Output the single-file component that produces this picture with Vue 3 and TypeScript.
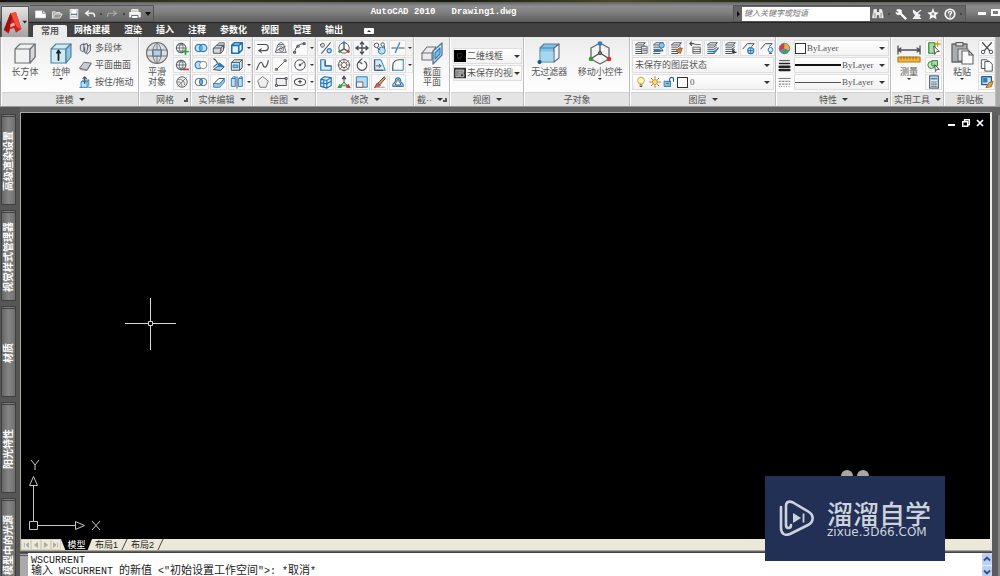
<script setup lang="ts">
import { ref } from 'vue'

type Group = { rows: string[][]; arrows?: boolean }

const K = '#4a4f55'
const B = '#2b7fc0'
const L = '#bfe0f3'
const p = (d: string, stroke = K, fill = 'none', w = 1.1) =>
  `<path d="${d}" stroke="${stroke}" fill="${fill}" stroke-width="${w}" stroke-linejoin="round" stroke-linecap="round"/>`
const c = (x: number, y: number, r: number, stroke = K, fill = 'none', w = 1.1) =>
  `<circle cx="${x}" cy="${y}" r="${r}" stroke="${stroke}" fill="${fill}" stroke-width="${w}"/>`
const layers = p('M5 2h8l-3 2.5H2zM2 7h7l3-2.300M2 9.500h7l3-2.300M2 12h7l3-2.300M2 14.300h7', K, 'none', 1.1)
const globe = c(7, 8, 5.5, K, '#eef1f3') + p('M1.500 8h11M3 4.500h8M3 11.500h8M7 2.500c-3 3-3 8 0 11M7 2.500c3 3 3 8 0 11', K, 'none', .8)

const icons: Record<string, string> = {
  // Quick access and info bar
  newDoc: p('M1 4h9l4 3v6H1z', '#eee', '#fff') + p('M10 4v3h4', '#777'),
  open: p('M2 13V5h4l1 1h5v2', '#eee', '#aaa') + p('M2 13l3-5h10l-3 5z', '#eee', '#999'),
  save: p('M3 2h10v12H3z', '#e8edf3', '#6d7a8c', 1.4) + p('M5 3h6v4H5z', '#fff', '#fff') + p('M5 10h6v4H5z', '#fff', '#ccd'),
  undo: p('M6 4L2 7l4 3M2 7h9q3 0 3 4', '#f2f2f2', 'none', 2),
  redo: p('M10 4l4 3-4 3M14 7H5Q2 7 2 11', '#a9a9a9', 'none', 1.6),
  print: p('M4 2h8v4H4z', '#fff', '#ccc') + p('M1 6h14v6H1z', '#fff', '#eee') + p('M4 10h8v4H4z', '#555', '#fff'),
  binoc: p('M3 2h3v4h4V2h3l2 11h-5V9H6v4H1z', '#fff', '#eee', .8) + p('M4 7v5M12 7v5', '#777'),
  wrench: p('M14 14L7 7', '#fff', 'none', 3.2) + p('M8 3C6 1 3 2 2 3l3 2-1 2-3-1c1 3 4 4 6 2 2-1 2-3 1-5z', '#fff', '#fff', 1),
  dish: p('M3 3c0 6 5 9 9 7zM8 7l5-4M7 9l-4 5h10l-4-4', '#f4f4f4', '#eee', 1.4),
  star: p('M8 1l2 4.800 5 .5-3.700 3.200 1.100 5L8 12l-4.400 2.500 1.100-5L1 6.300 6 5.800z', '#fff', '#fff', .5) + c(8, 8, 1.5, '#888', '#888'),
  help: c(8, 8, 6.500, '#fff', '#777', 2) + p('M6 6.500c0-3 4.500-2.500 4 0-.3 1.200-2 1.300-2 3M8 12v.1', '#fff', 'none', 1.8),
  // Modelling
  polysolid: p('M2 4l4-2v9l-2 1-2-2zM6 3l4-1 1 4-2 8-2-1V7M11 5l3-2v8l-4 4', K, '#dde2e6'),
  planar: p('M1 11l5-7 9 1-5 8z', '#666', '#c9cdd1') + p('M1 11l1 2 8 1 5-8', '#777'),
  press: p('M3 7h7v7H3zM3 7l2-2h7l-2 2M12 5v7l-2 2', B, L) + p('M7 9V1M5 3l2-2 2 2', K, 'none', 1.5) + p('M1 14h3M12 14h3', B),
  meshMore: globe + p('M9 12h6M12 9v6', '#36a23d', 'none', 2),
  meshLess: globe + p('M10 13h5', '#c33', 'none', 2),
  meshRefine: c(8, 8, 6, '#666', '#e9eaec') + p('M3 13L13 3M4 5c3-1 7 2 7 6M3 8c3-1 5 2 5 5', '#666', 'none', .9),
  union: c(5.5, 8, 4.200, B, L, 1.400) + c(10.500, 8, 4.200, B, L, 1.400) + p('M8 5c2 2 2 4 0 6-2-2-2-4 0-6z', B, '#8cc8ee'),
  subtract: c(5.500, 8, 4.200, B, L, 1.400) + c(10.500, 8, 4.200, '#888', '#fff'),
  intersect: c(5.500, 8, 4.200, '#666') + c(10.500, 8, 4.200, '#666') + p('M8 4.500c2 2 2 5 0 7-2-2-2-5 0-7z', B, '#8cc8ee', 1.400),
  extrudeFace: p('M5 5l3-3h6v6l-3 3H5z', '#777', '#c4c8cc') + p('M2 8h8v6H2zM2 8l3-3h8l-3 3M13 5v6l-3 3', K, '#d5d8db'),
  sweepFace: p('M2 13l5-4 7 1-4 4z', K, '#9fd0ee') + p('M2 1c4 1 3 5 6 7', K, 'none', 1.300) + p('M9 6l4 3-5 1z', B, B) + p('M2 10l5-4', B, 'none', 1.400),
  thicken: p('M2 10l6-6h6l-5 6z', K, '#fff') + p('M2 10v4h7l5-6V4l-5 6z', B, '#9fd0ee'),
  box: p('M2 5h8v9H2zM2 5l3-3h9l-4 3M14 2v8l-4 4', '#1c6fb5', '#e5f3fb', 1.800),
  imprint: p('M2 5h9v9H2zM2 5l3-3h9l-3 3M14 2v9l-3 3', K, '#cfe6f4') + p('M4 8h5v3H4z', B, '#86c3ea'),
  separate: p('M2 4h4v9H2zM10 4h4v9h-4zM2 4l2-2h2v2M10 4l2-2h2v2', B, L) + p('M8 2v13', K),
  // Draw
  pline: p('M2 4h9c4 0 4 7 0 7H4M6 9l-3 2 3 2', K, 'none', 1.300),
  helix: p('M2 13h12L11 4H5zM5 4c1-3 5-3 6 0M4 7c4-3 7 0 7 3s-6 2-5-1c1-2 4-1 3 1M3 11l10-5', K, 'none', .9),
  arc: p('M2 13C3 6 7 3 13 3M1 12h2v2H1zM5 5h2v2H5zM12 2h2v2h-2z', K),
  spline: p('M1 13C5 1 7 5 8 8s4 5 6-5', K, 'none', 1.400),
  line: p('M3 13L13 3M2 12h2v2H2zM12 2h2v2h-2z', '#666'),
  circle: c(8, 8, 6) + p('M8 8l4-3', K) + c(8, 8, 1, K, K),
  polygon: p('M8 2l6 5-2.500 7h-7L2 7z', '#777', '#eee'),
  rect: p('M3 4h11v8H3z', K, '#eee') + p('M2 11h2v2H2zM13 3h2v2h-2z', K, '#fff'),
  ellipse: '<ellipse cx="8" cy="8" rx="6.500" ry="4" fill="none" stroke="#4a4f55" stroke-width="1.200"/>' + p('M8 6v3M6.500 7.500h3', K, 'none', 1.400),
  // Modify
  mirror: p('M3 14L13 2', K, 'none', 1.300) + p('M2 4c2-3 5-1 4 2-2 2-5 1-4-2z', K, '#ddd') + p('M9 11c1-3 5-3 5 0s-4 4-5 0z', B, L, 1.400),
  rot3: c(8, 8, 6, '#666', '#f4f4f4') + p('M8 2v7M8 9l5 3M8 9l-5 3', K, 'none', 1.400) + c(8, 2, 1.200, B, B) + c(13, 12, 1.200, '#c33', '#c33') + c(3, 12, 1.200, '#393', '#393'),
  move: p('M8 1v14M1 8h14M6 3.500L8 1l2 2.500M6 12.500L8 15l2-2.500M3.500 6L1 8l2.500 2M12.500 6L15 8l-2.500 2', K, 'none', 1.500),
  alignObj: p('M2 2h5v7h7v5H2z', B, '#d7edf9', 1.400) + p('M7 4v5h6', K),
  array: c(8, 8, 6.300, '#555') + c(8, 8, 3, '#a55') + p('M8 1v4M8 11v4M1 8h4M11 8h4M3 3l3 3M13 13l-3-3M3 13l3-3M13 3l-3 3', '#777'),
  rotate: p('M5 4a5.500 5.500 0 1 0 6 0M8 1L4.500 4l3.500 2.500', K, 'none', 1.300),
  mesh3: p('M2 5l4-3 8 1v9l-5 3-7-2zM2 9l7 1 5-3M9 6v9M5.500 5.500v8.500M2 5l7 1 5-3', '#1c6fb5', '#d7edf9', 1.300),
  gizmo: p('M8 9V3M8 9l5 4M8 9l-5 4', K) + p('M6 4l2-3 2 3z', K, K) + p('M11 14l4 .5-2-3.500z', '#c33', '#c33') + p('M5 14l-4 .5L3 11z', '#393', '#393') + p('M5 12l3-4 3 4z', '#393', '#cfe5cf'),
  scale: p('M2 2h12v12H2z', B, '#b8dcf1') + p('M2 8h7v6H2z', '#666', '#f2f4f5'),
  copy: c(4, 5, 2.600) + c(11, 4, 2, K) + c(10, 11, 4, B, L) + p('M5 8l3 2M13 6v2', K),
  trim: p('M1 8h5M9 8h6', K, 'none', 1.300) + p('M5 13L10 2', B, 'none', 1.400),
  stretch: p('M2 2h7l5 12H2z', B, '#d7edf9') + p('M2 2v12h9M4 9h5M7 7l2 2-2 2', K),
  fillet: p('M2 14V9c0-5 4-7 7-7h5', K, 'none', 1.300) + p('M2 14h12V2', B),
  erase: p('M2 14l3-5 3 3z', '#a33', '#c66') + p('M6 9l7-7 1 2-6 7z', '#6a4a20', '#d9a66f') + p('M5 14h8', '#999'),
  offset: p('M2 13c-1-4 3-4 3-6 0-5 6-5 6 0 0 2 4 2 3 6z', B, L, 1.300) + p('M5 11c0-3 2-2 2-5 0-1 2-1 2 0 0 3 2 2 2 5z', K, '#fff'),
  // Layers
  layProps: layers + p('M9 6h6v8H9zM10 9h4M10 11h4', K, '#dfe5ea', .9),
  layCur: layers + c(11, 5, 3, B, '#8cc4e8') + p('M3 11h9', B, 'none', 2),
  layMatch: layers + p('M8 10l6-2-2 6-3-1z', '#a0561c', '#d98a3f'),
  layPrev: p('M2 3h5M4 1L2 3l2 2', K, 'none', 1.300) + p('M8 4h6M6 7h8v7H6zM6 9.500h8M6 12h8', '#666'),
  layIso: layers + p('M9 14l5-6M3 12h6', B, 'none', 1.600),
  layOff: layers + p('M10 9v5l4-1', '#234', '#345'),
  layFreeze: p('M1 9l5-6h8l-3 3', K, '#eee') + c(10, 11, 3.500, B, '#b9dcf2', 1.300) + p('M10 8v6M7 11h6', B),
  layBulb: p('M1 9l5-6h8l-3 3', K, '#eee') + c(12, 10, 2.700, B, '#d7edf9') + p('M11 14h2', K, 'none', 1.500),
  bulb: c(8, 6, 4.500, '#b79c3d', '#fff6b0') + p('M6.500 12h3M7 14h2', K, 'none', 1.600),
  sun: c(8, 8, 3.300, '#c07a10', '#ffe27a') + p('M8 1v2M8 13v2M1 8h2M13 8h2M3 3l1.500 1.500M11.500 11.500L13 13M3 13l1.500-1.500M11.500 4.500L13 3', '#a55f10', 'none', 1.200),
  unlock: p('M2 7h8v7H2z', '#2a6896', '#7cc0e6') + p('M9 7V4c0-3 5-3 5 0v3', '#1c5f95', 'none', 1.500) + p('M5 10h2', K),
  // Properties
  wheel: '<path d="M8 8V1.500A6.500 6.500 0 0 1 14 10z" fill="#e3b52b"/><path d="M8 8l6 2A6.500 6.500 0 0 1 2.500 11.500z" fill="#3e8ed0"/><path d="M8 8l-5.500 3.500A6.500 6.500 0 0 1 8 1.500z" fill="#c8414b"/><path d="M8 8l-2 6a6.500 6.500 0 0 0 6-1z" fill="#44a05b"/>' + c(8, 8, 6.5, '#777'),
  weights: p('M2 2h12', '#222', 'none', 1) + p('M2 5.500h12', '#222', 'none', 2) + p('M2 9.500h12M2 13.500h12', '#222', 'none', 3),
  types: p('M1 3h14', '#666') + '<path d="M1 6.500h14M1 10h14" stroke="#555" stroke-dasharray="3 1"/><path d="M1 13h14" stroke="#555" stroke-dasharray="1 2"/>',
  visual: '<path d="M0 0h16v16H0z" fill="#000"/>' + p('M5 5l4-1 2 3-2 4H6z', '#3a3a3a'),
  saved: '<path d="M0 1h16v14H0z" fill="#333"/>' + p('M3 4h10v3H7v6H3z', '#ccc', '#888') + p('M9 9h4v4H9z', '#ddd'),
  // Utilities and clipboard
  selAll: p('M2 2h7v12H2z', '#36863d', '#a9dca4', 1.400) + p('M8 6l6 6-3 0-2 3z', K, '#fff') + p('M12 1v5M10 3.500h5', '#d99b12', 'none', 1.600),
  selQuick: c(5, 8, 4, '#36863d', '#c8e8c4') + p('M6 3h6v6H6z', '#36863d', '#a9dca4') + p('M9 8l5 5h-3l-1 2z', K, '#fff'),
  calc: p('M3 1h10v14H3z', '#5a6b7c', '#dde7ef', 1.400) + p('M5 4h6', '#4b8cbd', 'none', 2) + '<path d="M5 8h6M5 10.500h6M5 13h6" stroke="#456" stroke-width="1.400" stroke-dasharray="1.500 .7"/>',
  cut: p('M3 2l8 9M13 2L5 11', K, 'none', 1.500) + c(3.500, 12.500, 2) + c(12.500, 12.500, 2),
  copyclip: p('M2 2h6l2 2v8H2z', K, '#fff') + p('M6 4h5l3 3v8H6z', K, '#fff'),
  matchprop: p('M2 2h11v9H2z', '#1c5f95', '#cfe5f5', 1.500) + p('M4 4h4v4H4z', B, B) + p('M7 14l3-5 5-2-2 6z', '#a9611a', '#e6a34a')
}

const big: Record<string, string> = {
  cube: p('M2 8h15v14H2zM2 8l5-5h15l-5 5M22 3v13l-5 6', '#6b6f73', '#f1f1f1', 1.200) + p('M17 8h.5L22 3v13l-5 6z', '#6b6f73', '#d5d7d9'),
  extrude: p('M2 8h15v14H2zM2 8l5-5h15l-5 5', '#4a7f9c', '#cfeaf6') + p('M17 8l5-5v13l-5 6z', '#4a7f9c', '#8ec6e0') + p('M9.500 19v-9', '#222', 'none', 1.800) + p('M7.500 12l2-3 2 3z', '#222', '#222'),
  sphere: c(12, 12, 10.500, '#6b6f73', '#dcdee1') + p('M2 9h20M2 15h20M12 1.500v21M12 1.500c-6 5-6 16 0 21M12 1.500c6 5 6 16 0 21', '#6b6f73', 'none', .9) + p('M8 9h8v6H8z', '#52748b', '#b6cedb'),
  section: p('M2 12l5-6h9l-4 6v7H2z', '#6b6f73', '#ececee') + p('M2 12h10', '#6b6f73') + p('M13 10l9-8v12l-9 9z', '#53788f', '#cfe3ef', 1.300) + p('M15 12l5-5v6l-5 5z', B, '#7fbde4'),
  filter: p('M3 7h14v14H3zM3 7l4-4h15l-5 4', '#54809b', '#7fc3e6') + p('M17 7l5-4v14l-5 4z', '#667', '#eaf4fa') + p('M4 11h12v9H4z', '#a5d8ef', '#a5d8ef') + c(2.500, 21, 1.500, '#16568c', '#16568c'),
  gizmo: p('M12 2l9 5v11l-9 5-9-5V7z', '#666', '#f4f5f5', 1.300) + p('M12 3v9M12 12l8 5M12 12l-8 5', K, 'none', 1.300) + c(12, 2.500, 1.800, '#2b7fc0', '#2b7fc0') + c(3, 18, 1.800, '#393', '#393') + c(21, 18, 1.800, '#c33', '#c33') + c(12, 12, 1.500, '#444', '#888'),
  measure: p('M1 5v8M23 5v8M1 9h22M4 7L1 9l3 2M20 7l3 2-3 2', K, 'none', 1.300) + p('M1 16h22v5H1z', '#b9790f', '#f0b73c', 1.200) + p('M4 16v2M7 16v2M10 16v2M13 16v2M16 16v2M19 16v2', '#8a5a10', 'none', .9),
  paste: p('M2 3h15v18H2z', '#666', '#a9adb1', 1.300) + p('M6 1.500h7v3.500H6z', '#555', '#d9dbdd') + p('M8 8h10v12H8z', '#666', '#ddd') + p('M12 10h7l4 4v9H12z', '#666', '#fafafa') + p('M19 10v4h4', '#555')
}

const solid: Group[] = [{ rows: [['union', 'extrudeFace', 'box'], ['subtract', 'sweepFace', 'imprint'], ['intersect', 'thicken', 'separate']], arrows: true }]
const draw: Group[] = [
  { rows: [['pline', 'helix'], ['spline', 'line'], ['polygon', 'rect']] },
  { rows: [['arc'], ['circle'], ['ellipse']], arrows: true }
]
const modify: Group[] = [
  { rows: [['mirror', 'rot3', 'move'], ['alignObj', 'array', 'rotate'], ['mesh3', 'gizmo', 'scale']] },
  { rows: [['copy', 'trim'], ['stretch', 'fillet'], ['erase', 'offset']], arrows: true }
]
const toolPanels = [
  { title: '实体编辑', cls: 'p-solid', groups: solid },
  { title: '绘图', cls: 'p-draw', groups: draw },
  { title: '修改', cls: 'p-mod', groups: modify }
]
const layerTools = [['layProps', 'layCur'], ['layMatch', 'layPrev'], ['layIso', 'layOff'], ['layFreeze', 'layBulb']]

const ribbonTabs = ['常用', '网格建模', '渲染', '插入', '注释', '参数化', '视图', '管理', '输出']
const active = ref('常用')
const palettes = ['高级渲染设置', '视觉样式管理器', '材质', '阳光特性', '模型中的光源']
const query = ref('')
</script>

<template>
  <div class="app">
    <div class="strip"></div>
    <header class="head">
      <button class="logo" aria-label="应用程序菜单">
        <svg viewBox="0 0 28 30">
          <path d="M2 23L9 5l6-1 6 18-6 4-2-5-4 1-2 5z" fill="#cf2020" />
          <path d="M9 5l6-1 6 18-5-2-5-11z" fill="#f0503f" />
          <path d="M2 23L9 5l2 5-4 15z" fill="#98120f" />
          <path d="M9 17l4-2 1 3-5 2z" fill="#f6b0a8" />
          <path d="M22 13h5l-2.500 3z" fill="#222" />
        </svg>
      </button>
      <div class="headmain">
        <div class="titlebar">
          <div class="qat">
            <button v-for="i in ['newDoc', 'open', 'save', 'undo']" :key="i" class="qb" :aria-label="i"><svg viewBox="0 0 16 16" v-html="icons[i]" /></button>
            <i class="dot"></i>
            <button class="qb" aria-label="redo"><svg viewBox="0 0 16 16" v-html="icons.redo" /></button>
            <i class="dot"></i>
            <button class="qb" aria-label="print"><svg viewBox="0 0 16 16" v-html="icons.print" /></button>
            <i class="tri dark"></i>
          </div>
          <h1><span>AutoCAD 2010</span><span>Drawing1.dwg</span></h1>
          <div class="info">
            <button class="expand" aria-label="展开"><i></i></button>
            <input v-model="query" type="text" placeholder="键入关键字或短语" aria-label="搜索" />
            <div class="tools">
              <button class="qb" aria-label="binoc"><svg viewBox="0 0 16 16" v-html="icons.binoc" /></button>
              <i class="dot"></i>
              <button v-for="i in ['wrench', 'dish', 'star', 'help']" :key="i" class="qb" :aria-label="i"><svg viewBox="0 0 16 16" v-html="icons[i]" /></button>
              <i class="dot"></i>
            </div>
          </div>
          <div class="win">
            <button aria-label="最小化"><i class="min"></i></button>
            <button aria-label="还原"><i class="max"></i></button>
          </div>
        </div>
        <nav class="tabs">
          <button v-for="t in ribbonTabs" :key="t" class="tab" :class="{ on: t === active }" @click="active = t">{{ t }}</button>
          <button class="mini" aria-label="最小化功能区"><i></i></button>
        </nav>
      </div>
    </header>

    <section class="ribbon">
      <div class="panel">
        <div class="body">
          <button class="bigb w48"><svg viewBox="0 0 24 24" v-html="big.cube" /><span>长方体</span><i class="tri s"></i></button>
          <button class="bigb w24"><svg viewBox="0 0 24 24" v-html="big.extrude" /><span>拉伸</span><i class="tri s"></i></button>
          <div class="stack names">
            <button><svg viewBox="0 0 16 16" v-html="icons.polysolid" />多段体</button>
            <button><svg viewBox="0 0 16 16" v-html="icons.planar" />平面曲面</button>
            <button><svg viewBox="0 0 16 16" v-html="icons.press" />按住/拖动</button>
          </div>
        </div>
        <footer>建模<i class="tri"></i></footer>
      </div>
      <div class="panel">
        <div class="body">
          <button class="bigb w34 two"><svg viewBox="0 0 24 24" v-html="big.sphere" /><span>平滑<br />对象</span></button>
          <div class="stack">
            <button v-for="i in ['meshMore', 'meshLess', 'meshRefine']" :key="i" class="ib" :aria-label="i"><svg viewBox="0 0 16 16" v-html="icons[i]" /></button>
          </div>
        </div>
        <footer>网格<i class="corner"></i></footer>
      </div>
      <div v-for="pn in toolPanels" :key="pn.title" class="panel">
        <div class="body grids" :class="pn.cls">
          <div v-for="(g, gi) in pn.groups" :key="gi" class="stack">
            <div v-for="(r, ri) in g.rows" :key="ri" class="cells">
              <button v-for="i in r" :key="i" class="ib" :aria-label="i"><svg viewBox="0 0 16 16" v-html="icons[i]" /></button>
              <button v-if="g.arrows && !(pn.title === '修改' && ri === 2)" class="drop" aria-label="更多"><i class="tri s"></i></button>
            </div>
          </div>
        </div>
        <footer>{{ pn.title }}<i class="tri"></i></footer>
      </div>
      <div class="panel">
        <div class="body">
          <button class="bigb w34 two"><svg viewBox="0 0 24 24" v-html="big.section" /><span>截面<br />平面</span></button>
        </div>
        <footer class="narrow">截··<i class="tri"></i><i class="corner"></i></footer>
      </div>
      <div class="panel">
        <div class="body">
          <div class="stack views">
            <button class="combo"><svg viewBox="0 0 16 16" v-html="icons.visual" /><span>二维线框</span><i class="tri"></i></button>
            <button class="combo"><svg viewBox="0 0 16 16" v-html="icons.saved" /><span>未保存的视图</span><i class="tri"></i></button>
          </div>
        </div>
        <footer>视图<i class="tri"></i></footer>
      </div>
      <div class="panel">
        <div class="body spread">
          <button class="bigb"><svg viewBox="0 0 24 24" v-html="big.filter" /><span>无过滤器</span><i class="tri s"></i></button>
          <button class="bigb"><svg viewBox="0 0 24 24" v-html="big.gizmo" /><span>移动小控件</span><i class="tri s"></i></button>
        </div>
        <footer>子对象</footer>
      </div>
      <div class="panel">
        <div class="body">
          <div class="stack fill">
            <div class="cells between">
              <div v-for="(g, n) in layerTools" :key="n" class="cells">
                <button v-for="i in g" :key="i" class="ib" :aria-label="i"><svg viewBox="0 0 16 16" v-html="icons[i]" /></button>
              </div>
            </div>
            <button class="combo"><span>未保存的图层状态</span><i class="tri"></i></button>
            <button class="combo">
              <svg v-for="i in ['bulb', 'sun', 'unlock']" :key="i" viewBox="0 0 16 16" v-html="icons[i]" />
              <i class="swatch"></i><span class="lat">0</span><i class="tri"></i>
            </button>
          </div>
        </div>
        <footer>图层<i class="tri"></i></footer>
      </div>
      <div class="panel">
        <div class="body">
          <div class="stack fill">
            <div class="prop"><svg viewBox="0 0 16 16" v-html="icons.wheel" /><button class="combo"><i class="swatch"></i><span class="lat">ByLayer</span><i class="tri"></i></button></div>
            <div class="prop"><svg viewBox="0 0 16 16" v-html="icons.weights" /><button class="combo"><i class="rule thick"></i><span class="lat">ByLayer</span><i class="tri"></i></button></div>
            <div class="prop"><svg viewBox="0 0 16 16" v-html="icons.types" /><button class="combo"><i class="rule"></i><span class="lat">ByLayer</span><i class="tri"></i></button></div>
          </div>
        </div>
        <footer>特性<i class="tri"></i><i class="corner"></i></footer>
      </div>
      <div class="panel">
        <div class="body">
          <button class="bigb w34"><svg viewBox="0 0 24 24" v-html="big.measure" /><span>测量</span><i class="tri s"></i></button>
          <div class="stack">
            <button v-for="i in ['selAll', 'selQuick', 'calc']" :key="i" class="ib" :aria-label="i"><svg viewBox="0 0 16 16" v-html="icons[i]" /></button>
          </div>
        </div>
        <footer>实用工具<i class="tri"></i></footer>
      </div>
      <div class="panel">
        <div class="body">
          <button class="bigb w34"><svg viewBox="0 0 24 24" v-html="big.paste" /><span>粘贴</span><i class="tri s"></i></button>
          <div class="stack">
            <button v-for="i in ['cut', 'copyclip', 'matchprop']" :key="i" class="ib" :aria-label="i"><svg viewBox="0 0 16 16" v-html="icons[i]" /></button>
          </div>
        </div>
        <footer>剪贴板</footer>
      </div>
    </section>

    <main class="work">
      <aside class="side">
        <button v-for="n in palettes" :key="n" class="pal"><span>{{ n }}</span></button>
      </aside>
      <div class="center">
        <div class="doc">
          <div class="canvas">
            <div class="docwin">
              <button aria-label="最小化"><svg viewBox="0 0 8 8"><path d="M0 6h7" stroke="#fff" stroke-width="2" /></svg></button>
              <button aria-label="还原"><svg viewBox="0 0 8 8"><path d="M2.500 2V.8h5v5H6M.7 2.700h5v4.500h-5z" stroke="#fff" stroke-width="1.400" fill="none" /></svg></button>
              <button aria-label="关闭"><svg viewBox="0 0 8 8"><path d="M1 1l6 6M7 1L1 7" stroke="#fff" stroke-width="1.700" /></svg></button>
            </div>
            <svg class="cross" viewBox="0 0 52 52"><path d="M1 25.500h23M28 25.500h24M26.500 0v23M26.500 28v24" stroke="#d8d8d8" /><path d="M24.500 23.500h4v4h-4z" stroke="#d8d8d8" fill="none" /></svg>
            <svg class="ucs" viewBox="0 0 76 76">
              <g fill="none" stroke="#c8c8c8">
                <path d="M4.500 62.500h8v8h-8zM8.500 62V27M13 66.500h37M8.500 17.500l4 9h-8zM59.500 66.500l-9-4v8z" />
                <path d="M6 1l4 5 4-5M10 6v5M67 62l8 9M75 62l-8 9" />
              </g>
            </svg>
            <div class="bumps"><i></i><i></i></div>
          </div>
          <div class="sheets">
            <button v-for="d in ['M3 2v6M8 2L5 5l3 3z', 'M7 2L3 5l4 3z', 'M3 2l4 3-4 3z', 'M7 2v6M2 2l3 3-3 3z']" :key="d" class="nav" aria-label="翻页"><svg viewBox="0 0 10 10"><path :d="d" fill="#aaa89a" stroke="#aaa89a" /></svg></button>
            <button class="sheet cur">模型</button>
            <button class="sheet">布局1</button><i class="slash"></i>
            <button class="sheet">布局2</button><i class="slash"></i>
          </div>
        </div>
        <div class="cmd">
          <div class="grip"></div>
          <div class="log">
            <p><b>WSCURRENT</b></p>
            <p>输入<b> WSCURRENT </b>的新值<b> &lt;"</b>初始设置工作空间<b>"&gt;: *</b>取消<b>*</b></p>
          </div>
          <div class="scroll">
            <button aria-label="向上"><svg viewBox="0 0 10 10"><path d="M2 6.500L5 3.500l3 3" fill="none" stroke="#34507f" stroke-width="1.800" /></svg></button>
            <button aria-label="向下"><svg viewBox="0 0 10 10"><path d="M2 3.500l3 3 3-3" fill="none" stroke="#34507f" stroke-width="1.800" /></svg></button>
          </div>
        </div>
      </div>
      <div class="edge"></div>
    </main>

    <div class="mark">
      <svg viewBox="0 0 36 36">
        <g fill="none" stroke="#cdd2dc" stroke-width="2.600" stroke-linecap="round" stroke-linejoin="round">
          <path d="M2 7v21c0 6 4 8 9 6l18-9c6-3 6-10 1-13L14 2.500C10 .5 7 2 7 6v19c0 4 5 4 5 0" />
        </g>
        <path d="M14 13l8 5-8 5z" fill="#cdd2dc" /><path d="M24.500 13.500v9" stroke="#cdd2dc" stroke-width="1.800" />
      </svg>
      <div><strong>溜溜自学</strong><small>zixue.3D66.COM</small></div>
    </div>
  </div>
</template>

<style>
html, body { background: #666; overflow: hidden; }
</style>

<style scoped>
.app { height: 100vh; display: flex; flex-direction: column; position: relative; overflow: hidden; font: 9px/10px "Liberation Sans", "Noto Sans CJK SC", sans-serif; color: #555; background: #626262; }
.app * { box-sizing: border-box; }
button { border: 0; padding: 0; margin: 0; background: none; font: inherit; color: inherit; display: flex; align-items: center; justify-content: center; flex: none; }
svg { display: block; flex: none; }
i { display: block; flex: none; }
h1, p { margin: 0; }
.tri { width: 0; height: 0; border: 3px solid transparent; border-top-color: #333; border-bottom: 0; }
.tri.s { border-width: 2px; border-bottom: 0; }
.tri.dark { border-top-color: #111; border-width: 4px; border-left-width: 3px; border-right-width: 3px; border-bottom: 0; }
.dot { width: 2px; height: 2px; background: #444; }
.strip { height: 2px; flex: none; background: linear-gradient(90deg, #111, #343d20 20%, #151a10 45%, #4b4a26 62%, #1c2414 80%, #222); }

.head { display: flex; flex: none; height: 35px; background: #424242; }
.headmain { flex: 1; min-width: 0; display: flex; flex-direction: column; }
.logo { position: relative; z-index: 1; width: 28px; margin: 4px 0 0 1px; background: linear-gradient(#e4e4e4, #a4a4a4); border: 1px solid #555; border-bottom: 0; }
.logo svg { width: 26px; height: 29px; }
.titlebar { height: 21px; margin-left: -29px; padding-left: 30px; display: flex; align-items: stretch; justify-content: space-between; background: linear-gradient(#606060, #8d8d8d 20%, #818181 50%, #5d5d5d); border-bottom: 1px solid #252525; }
.qat { display: flex; align-items: center; justify-content: space-between; width: 124px; margin-top: 3px; padding: 0 2px 0 5px; border: 1px solid #555; border-left: 0; background: linear-gradient(#858585, #666); }
.qb svg { width: 12px; height: 12px; }
.titlebar h1 { flex: 1; display: flex; justify-content: center; align-items: center; gap: 16px; font: bold 9px/12px "Liberation Mono", monospace; color: #fff; }
.info { display: flex; align-items: center; width: 233px; margin-top: 3px; border: 1px solid #555; background: #666; }
.info input { flex: 1; min-width: 0; height: 14px; border: 0; border-radius: 0; padding: 0 2px; background: #fff; font: italic 8px/12px "Liberation Sans", "Noto Sans CJK SC", sans-serif; outline: 0; }
.info input::placeholder { color: #777; opacity: 1; }
.tools { width: 95px; display: flex; align-items: center; justify-content: space-between; padding: 0 3px 0 2px; }
.expand { width: 8px; height: 14px; }
.expand i { border: 3px solid transparent; border-left-color: #111; border-right: 0; }
.win { display: flex; gap: 5px; width: 34px; padding-left: 12px; align-items: center; overflow: hidden; }
.win .min { width: 8px; height: 3px; background: #fff; margin-top: 2px; }
.win .max { width: 9px; height: 7px; border: 2px solid #fff; }
.tabs { display: flex; align-items: flex-end; flex: 1; gap: 14px; padding-left: 4px; color: #fff; font-weight: bold; }
.tab { height: 14px; }
.tab.on { width: 34px; height: 12px; margin-right: -7px; background: #ececec; color: #555; border-radius: 2px 2px 0 0; }
.mini { width: 10px; height: 6px; margin: 0 0 3px 7px; background: #fff; border-radius: 1px; }
.mini i { border: 2px solid transparent; border-top: 0; border-bottom-color: #333; }

.ribbon { flex: none; display: grid; grid-template-columns: 138fr 52fr 62fr 63fr 98fr 36fr 74fr 106fr 146fr 115fr 53fr 52fr; padding: 0 4px 0 1px; background: #aaa; border-bottom: 1px solid #999; }
.panel { min-width: 0; display: flex; flex-direction: column; border-right: 1px solid #bdbdbd; border-left: 1px solid #fff; background: linear-gradient(#ececec, #fbfbfb 60%, #fff); }
.body { height: 55px; display: flex; padding: 3px 1px 0; overflow: hidden; }
.panel footer { height: 14px; display: flex; align-items: center; justify-content: center; gap: 5px; position: relative; background: #e4e4e4; border-top: 1px solid #d2d2d2; white-space: nowrap; }
.panel footer.narrow { justify-content: flex-start; padding-left: 2px; }
.corner { width: 4px; height: 4px; border-right: 2px solid #555; border-bottom: 2px solid #555; position: absolute; right: 2px; bottom: 4px; }
.bigb { flex-direction: column; justify-content: flex-start; line-height: 10px; }
.bigb svg { width: 24px; height: 24px; margin: 1px 0 2px; }
.bigb span { white-space: nowrap; }
.bigb .tri { margin-top: 1px; }
.bigb.two { line-height: 10px; }
.w48 { width: 44px; }
.w24 { width: 28px; }
.w34 { width: 32px; }
.spread { justify-content: space-around; }
.stack { display: flex; flex-direction: column; gap: 1px; }
.fill { flex: 1; min-width: 0; }
.names { margin-left: 4px; }
.names button { height: 16px; justify-content: flex-start; gap: 3px; white-space: nowrap; }
.names svg { width: 13px; height: 13px; }
.cells { display: flex; gap: 1px; }
.between { justify-content: space-between; }
.ib { width: 17px; height: 16px; border: 1px solid #e0e0e0; background: #fafafa; }
.ib svg { width: 14px; height: 14px; }
.drop { width: 6px; height: 16px; border: 1px solid #e6e6e6; border-left: 0; }
.grids { justify-content: space-between; padding: 3px 0 0; }
.combo { height: 16px; flex: auto; min-width: 0; gap: 2px; padding: 0 3px 0 2px; border: 1px solid #dedede; background: linear-gradient(#fff, #f2f2f2); justify-content: flex-start; text-align: left; overflow: hidden; }
.combo span { flex: 1; min-width: 0; white-space: nowrap; overflow: hidden; }
.combo svg { width: 12px; height: 12px; }
.stack > .combo { flex: none; }
.views { flex: 1; min-width: 0; padding: 8px 0 0 1px; }
.views .combo { gap: 1px; padding: 0 1px 0 0; }
.lat { font: 9px/10px "Liberation Serif", "DejaVu Serif", serif; }
.swatch { width: 11px; height: 11px; border: 1px solid #333; background: #fff; }
.prop { display: flex; gap: 3px; align-items: center; }
.prop > svg { width: 13px; height: 13px; }
.prop .combo { padding-left: 0; gap: 1px; }
.rule { width: 46px; height: 1px; background: #555; }
.rule.thick { height: 2px; background: #111; }

.work { flex: 1; min-height: 0; display: flex; overflow: hidden; }
.side { width: 20px; flex: none; display: flex; flex-direction: column; gap: 5px; padding: 7px 4px 0 1px; background: #565656; overflow: hidden; }
.pal { height: 91px; background: linear-gradient(90deg, #666, #858585 50%, #707070); border: 1px solid #3f3f3f; border-top: 3px double #3f3f3f; }
.pal span { writing-mode: vertical-rl; text-orientation: sideways; transform: rotate(180deg); color: #fff; font-weight: bold; font-size: 10px; line-height: 11px; white-space: nowrap; }
.center { flex: 1; min-width: 0; display: flex; flex-direction: column; padding-top: 5px; }
.doc { flex: 1; min-height: 0; display: flex; flex-direction: column; border: 1px solid #a9aa9c; border-right: 2px solid #e8e8e0; }
.canvas { flex: 1; min-height: 0; background: #000; position: relative; overflow: hidden; }
.docwin { display: flex; justify-content: flex-end; gap: 6px; padding: 6px 6px 0 0; }
.docwin svg { width: 8px; height: 8px; }
.cross { position: absolute; left: 103px; top: 185px; width: 52px; height: 52px; }
.ucs { position: absolute; left: 4px; bottom: 4px; width: 76px; height: 76px; }
.bumps { position: absolute; right: 121px; bottom: 57px; display: flex; gap: 4px; }
.bumps i { width: 12px; height: 12px; border-radius: 50%; background: #aaa6a2; }
.sheets { flex: none; height: 11px; display: flex; background: #ece9d8; color: #222; }
.nav { width: 10px; border: 1px solid #d6d3c2; }
.nav svg { width: 8px; height: 8px; }
.sheet { padding: 0 3px; }
.sheet.cur { width: 31px; background: #000; color: #fff; clip-path: polygon(0 0, 100% 0, 86% 100%, 14% 100%); }
.slash { width: 1px; margin: 0 3px; background: #444; transform: skewX(-25deg); }
.cmd { flex: none; display: flex; height: 24px; margin-top: 1px; background: #fff; border-top: 1px solid #444; }
.grip { width: 8px; flex: none; background: #aaa; border-top: 3px double #555; }
.log { flex: 1; min-width: 0; padding: 1px 0 0 3px; color: #222; font-size: 11px; line-height: 11px; white-space: nowrap; overflow: hidden; }
.log b { font: 10px/10px "Liberation Mono", monospace; white-space: pre; }
.log p { height: 11px; }
.scroll { width: 10px; display: flex; flex-direction: column; gap: 1px; background: #e6ecf8; }
.scroll button { width: 10px; height: 12px; background: #bccff5; border-radius: 2px; }
.scroll svg { width: 10px; height: 10px; }
.edge { width: 8px; flex: none; margin-top: 8px; border-right: 2px solid #858585; background: #5c5c5c; }

.mark { position: absolute; right: 55px; bottom: 15px; width: 180px; height: 85px; display: flex; align-items: center; gap: 12px; padding: 0 0 2px 14px; background: #233056; color: #cdd2dc; }
.mark svg { width: 36px; height: 36px; }
.mark div { display: flex; flex-direction: column; }
.mark strong { font: 500 26px/28px "Noto Sans CJK SC", sans-serif; }
.mark small { font: 12px/10px "DejaVu Sans", sans-serif; }
</style>
